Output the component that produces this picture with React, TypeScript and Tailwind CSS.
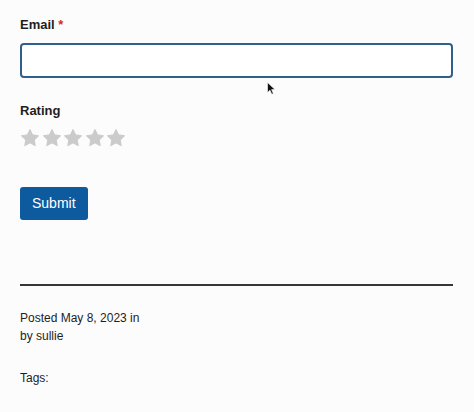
import React from 'react';

const font = { fontFamily: '"Liberation Sans", Arial, Helvetica, sans-serif' };

function Star() {
  return (
    <svg width="20" height="20" viewBox="0 0 24 24" className="block">
      <polygon
        points="12,2 15.09,8.26 22,9.27 17,14.14 18.18,21.02 12,17.77 5.82,21.02 7,14.14 2,9.27 8.91,8.26"
        fill="#cbcbcb"
        stroke="#cbcbcb"
        strokeWidth="1.4"
        strokeLinejoin="round"
      />
    </svg>
  );
}

export default function App() {
  return (
    <div
      className="relative w-[474px] h-[412px] bg-[#fcfcfc] pl-5 pr-[21px] pt-4 text-[#1e1e1e] overflow-hidden"
      style={font}
    >
      {/* Email field */}
      <label className="block text-[13px] leading-[18px] font-bold">
        Email <span className="text-[#d02c2c]">*</span>
      </label>
      <input
        type="email"
        className="mt-[9px] block w-full h-[35px] rounded-[4px] border-2 border-[#2f5f8c] bg-white outline-none"
      />

      {/* Rating */}
      <div className="mt-[24px] text-[13px] leading-[18px] font-bold">Rating</div>
      <div className="mt-[8px] flex gap-[1.6px]">
        {[0, 1, 2, 3, 4].map((i) => (
          <Star key={i} />
        ))}
      </div>

      {/* Submit */}
      <button className="mt-[39px] block h-[33px] px-3 rounded-[3px] bg-[#0e5a9f] text-white text-[14px]">
        Submit
      </button>

      <hr className="mt-[64px] border-0 h-[2px] bg-[#363636]" />

      {/* Post meta */}
      <div className="mt-[23px] text-[12px] leading-[18px] text-[#1e1e1e]">
        <div>Posted May 8, 2023 in</div>
        <div>by sullie</div>
      </div>
      <div className="mt-[24px] text-[12px] leading-[18px]">Tags:</div>

      {/* mouse pointer */}
      <svg
        width="9"
        height="13"
        viewBox="0 0 9 13"
        className="absolute left-[267px] top-[82px]"
      >
        <path d="M0.5 0.5 L0.5 10.5 L3 8.2 L4.8 12.3 L6.3 11.6 L4.6 7.6 L8 7.6 Z" fill="#111" stroke="#fff" strokeWidth="0.6" />
      </svg>
    </div>
  );
}
